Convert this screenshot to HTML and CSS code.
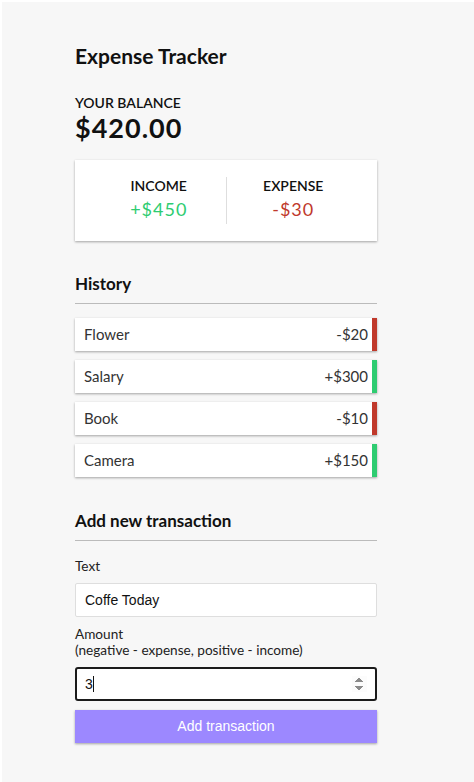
FILE: index.html
```html
<!DOCTYPE html>
<html lang="en">
<head>
  <meta charset="UTF-8">
  <title>Expense Tracker</title>
  <link rel="stylesheet" href="styles.css">
</head>
<body>

  <div class="container">
    <h2>Expense Tracker</h2>

    <!-- Balance -->
    <h4>Your Balance</h4>
    <h1 id="balance">$420.00</h1>

    <div class="inc-exp-container">
      <div>
        <h4>Income</h4>
        <p id="money-plus" class="money plus">+$450</p>
      </div>
      <div>
        <h4>Expense</h4>
        <p id="money-minus" class="money minus">-$30</p>
      </div>
    </div>

    <!-- History -->
    <h3>History</h3>
    <ul id="list" class="list">
      <li class="minus">Flower <span>-$20</span></li>
      <li class="plus">Salary <span>+$300</span></li>
      <li class="minus">Book <span>-$10</span></li>
      <li class="plus">Camera <span>+$150</span></li>
    </ul>

    <!-- Form -->
    <h3>Add new transaction</h3>
    <form id="form">
      <div class="form-control">
        <label for="text">Text</label>
        <input type="text" id="text" value="Coffe Today" placeholder="Enter text...">
      </div>
      <div class="form-control">
        <label for="amount">Amount <br>(negative - expense, positive - income)</label>
        <div class="amount-wrap">
          <input type="number" id="amount" class="active" value="3" placeholder="Enter amount...">
          <span class="caret"></span>
        </div>
      </div>
      <button class="btn" type="button">Add transaction</button>
    </form>
  </div>

</body>
</html>
```

FILE: styles.css
```css
/* General Reset */
* {
  box-sizing: border-box;
}

html {
  background-color: #fff;
}

body {
  background-color: #f7f7f7;
  font-family: 'Lato', 'Noto Sans', sans-serif;
  color: #111;
  margin: 2px 0 0 2px;
  min-height: 780px;
  padding: 41px 0 30px 73px;
}

.container {
  width: 302px;
}

h1 {
  font-size: 27px;
  letter-spacing: 1px;
  margin: 0 0 16px;
}

h2 {
  font-size: 21px;
  margin: 0 0 26px;
}

h3 {
  font-size: 17px;
  border-bottom: 1px solid #bbb;
  padding-bottom: 9px;
  margin: 32px 0 9px;
}

h4 {
  font-size: 14px;
  font-weight: 600;
  margin: 0;
  text-transform: uppercase;
}

/* Income / Expense */
.inc-exp-container {
  background-color: #fff;
  box-shadow: 0 1px 3px rgba(0,0,0,0.12), 0 1px 2px rgba(0,0,0,0.24);
  padding: 17px;
  display: flex;
  justify-content: space-between;
  margin: 0 0 20px;
}

.inc-exp-container > div {
  flex: 1;
  text-align: center;
}

.inc-exp-container > div:first-of-type {
  border-right: 1px solid #dedede;
}

.money {
  font-size: 18px;
  letter-spacing: 1px;
  margin: 4px 0;
}

.money.plus {
  color: #2ecc71;
}

.money.minus {
  color: #c0392b;
}

/* History list */
.list {
  list-style-type: none;
  padding: 0;
  margin: 14px 0 33px;
}

.list li {
  background-color: #fff;
  box-shadow: 0 1px 3px rgba(0,0,0,0.12), 0 1px 2px rgba(0,0,0,0.24);
  color: #333;
  font-size: 15px;
  line-height: 17px;
  display: flex;
  justify-content: space-between;
  padding: 8px 4px 8px 9px;
  margin: 0 0 9px;
}

.list li.plus {
  border-right: 5px solid #2ecc71;
}

.list li.minus {
  border-right: 5px solid #c0392b;
}

/* Form */
label {
  display: block;
  font-size: 13.6px;
  color: #222;
  margin: 9px 0;
}

.form-control:first-child label {
  margin-top: 17px;
}

input[type='text'],
input[type='number'] {
  border: 1px solid #dedede;
  border-radius: 2px;
  display: block;
  font-family: 'Liberation Sans', Arial, sans-serif;
  font-size: 14px;
  line-height: 16px;
  color: #111;
  padding: 8px 9px;
  width: 100%;
  background: #fff;
}

input.active {
  border: 2px solid #1b1b1b;
  border-radius: 3px;
  padding: 7px 8px;
  outline: none;
}

input[type='number']::-webkit-inner-spin-button {
  opacity: 1;
}

.amount-wrap {
  position: relative;
}

.caret {
  position: absolute;
  left: 18px;
  top: 9px;
  width: 1px;
  height: 16px;
  background: #111;
}

.btn {
  cursor: pointer;
  background-color: #9c88ff;
  box-shadow: 0 1px 3px rgba(0,0,0,0.12), 0 1px 2px rgba(0,0,0,0.24);
  color: #fff;
  border: 0;
  display: block;
  font-family: 'Liberation Sans', Arial, sans-serif;
  font-size: 14px;
  line-height: 17px;
  margin: 9px 0 30px;
  padding: 8px;
  width: 100%;
}
```
